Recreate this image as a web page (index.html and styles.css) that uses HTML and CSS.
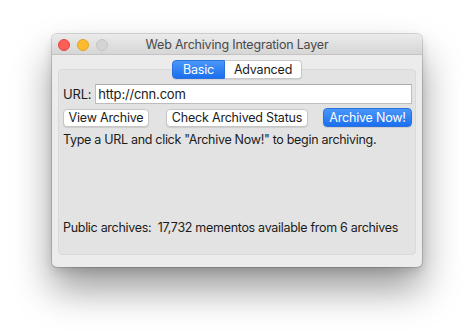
FILE: index.html
```html
<!DOCTYPE html>
<html lang="en">

<head>
    <meta charset="UTF-8">
    <meta name="viewport" content="width=device-width, initial-scale=1.0">
    <title>Web Archiving Integration Layer</title>
    <link rel="stylesheet" href="styles.css">
</head>

<body>

    <div class="window">
        <!-- Title bar -->
        <div class="titlebar">
            <div class="lights">
                <span class="light close"></span>
                <span class="light minimize"></span>
                <span class="light zoom"></span>
            </div>
            <div class="title">Web Archiving Integration Layer</div>
        </div>

        <div class="content">
            <div class="tabs">
                <span class="tab active">Basic</span>
                <span class="tab">Advanced</span>
            </div>

            <div class="group">
                <div class="url-row">
                    <label for="urlInput">URL:</label>
                    <input type="text" id="urlInput" value="http://cnn.com">
                </div>

                <div class="button-row">
                    <button class="btn">View Archive</button>
                    <button class="btn">Check Archived Status</button>
                    <button class="btn primary">Archive Now!</button>
                </div>

                <p class="status">Type a URL and click "Archive Now!" to begin archiving.</p>

                <p class="summary">Public archives:&nbsp; 17,732 mementos available from 6 archives</p>
            </div>
        </div>
    </div>

</body>

</html>
```

FILE: styles.css
```css
/* Basic Reset */

* {
    box-sizing: border-box;
    margin: 0;
    padding: 0;
}

html,
body {
    height: 100%;
    overflow: hidden;
}

body {
    font-family: Inter, "Noto Sans", "Liberation Sans", sans-serif;
    font-size: 12.5px;
    letter-spacing: -0.2px;
    color: #1b1b1b;
    background: #fff;
    padding: 34px 0 0 52px;
    min-height: 335px;
}
/* Window */

.window {
    width: 370px;
    height: 233px;
    background: #ececec;
    border-radius: 5px;
    box-shadow: 0 0 0 1px rgba(0, 0, 0, 0.14), 0 4px 10px rgba(0, 0, 0, 0.12), 0 22px 38px rgba(0, 0, 0, 0.4);
    overflow: hidden;
}

.titlebar {
    position: relative;
    height: 21px;
    background: linear-gradient(#ebebeb, #d6d6d6);
    border-bottom: 1px solid #c4c4c4;
    display: flex;
    align-items: center;
    justify-content: center;
}

.lights {
    position: absolute;
    left: 6px;
    top: 5px;
    display: flex;
    gap: 7px;
}

.light {
    width: 12px;
    height: 12px;
    border-radius: 50%;
}

.close {
    background: #fc5f57;
    border: 1px solid #e2463f;
}

.minimize {
    background: #fdbc2e;
    border: 1px solid #e0a028;
}

.zoom {
    background: #d4d4d4;
    border: 1px solid #c4c4c4;
}

.title {
    color: #4a4a4a;
    padding-top: 1px;
}
/* Content */

.content {
    padding: 5px 6px 0;
}

.tabs {
    position: relative;
    z-index: 1;
    display: flex;
    justify-content: center;
}

.tab {
    height: 19px;
    line-height: 17px;
    background: #fff;
    border: 1px solid #c9c9c9;
    border-left: none;
    border-radius: 0 4px 4px 0;
    box-shadow: 0 1px 1px rgba(0, 0, 0, 0.08);
    width: 77px;
    text-align: center;
}

.tab.active {
    width: 53px;
    color: #fff;
    background: linear-gradient(#4a97f8, #1b6ff0);
    border: 1px solid #2a72e0;
    border-radius: 4px 0 0 4px;
}

.group {
    margin-top: -10px;
    height: 186px;
    background: #e3e3e3;
    border: 1px solid #d9d9d9;
    border-radius: 4px;
    padding: 14px 3px 0 4px;
}

.url-row {
    display: flex;
    align-items: center;
    gap: 4px;
}

.url-row label {
    font-size: 13px;
}

.url-row input {
    flex: 1;
    height: 20px;
    border: 1px solid #bdbdbd;
    border-top-color: #aaa;
    background: #fff;
    font-family: inherit;
    font-size: 13px;
    letter-spacing: -0.2px;
    color: #1b1b1b;
    padding: 0 2px;
    outline: none;
}

.button-row {
    display: flex;
    align-items: center;
    margin-top: 4px;
}

.btn {
    height: 18px;
    font-family: inherit;
    font-size: 12.5px;
    letter-spacing: -0.2px;
    white-space: nowrap;
    color: #1b1b1b;
    background: #fff;
    border: 1px solid #c6c6c6;
    border-radius: 4px;
    box-shadow: 0 1px 1px rgba(0, 0, 0, 0.1);
}

.btn:first-child {
    width: 86px;
}

.btn:nth-child(2) {
    width: 142px;
    margin-left: 17px;
    margin-right: auto;
}

.btn.primary {
    width: 89px;
    height: 19px;
    color: #fff;
    background: linear-gradient(#4a97f8, #1b6ff0);
    border-color: #2a72e0;
}

.status,
.summary {
    line-height: 16px;
    white-space: nowrap;
    letter-spacing: -0.3px;
}

.status {
    margin-top: 5px;
}

.summary {
    margin-top: 72px;
}
```
